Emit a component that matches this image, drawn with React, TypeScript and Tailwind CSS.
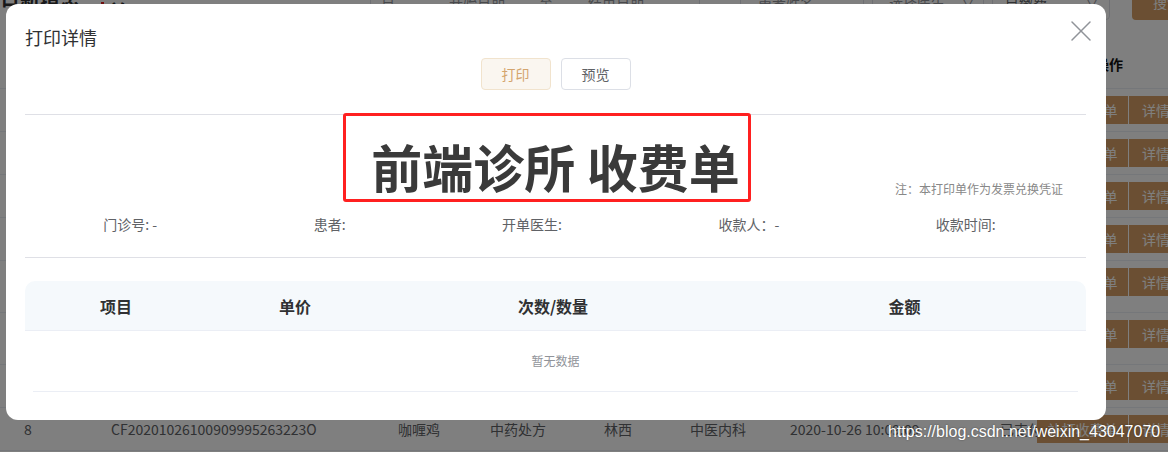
import { X } from 'lucide-react';

type Row = {
  no: number;
  code: string;
  patient: string;
  kind: string;
  doctor: string;
  dept: string;
  time: string;
  status: string;
  height: string;
};

const rows: Row[] = [
  { no: 1, code: 'CF20201026093012345678901A', patient: '张三', kind: '西药处方', doctor: '林西', dept: '内科', time: '2020-10-26 09:30:12', status: '已支付', height: 'h-[43px]' },
  { no: 2, code: 'CF20201026093512345678902B', patient: '李四', kind: '中药处方', doctor: '林西', dept: '中医内科', time: '2020-10-26 09:35:40', status: '已支付', height: 'h-[43px]' },
  { no: 3, code: 'CF20201026094012345678903C', patient: '王五', kind: '检查申请', doctor: '林西', dept: '外科', time: '2020-10-26 09:40:05', status: '已支付', height: 'h-[43px]' },
  { no: 4, code: 'CF20201026094512345678904D', patient: '赵六', kind: '西药处方', doctor: '林西', dept: '内科', time: '2020-10-26 09:45:22', status: '已支付', height: 'h-[43px]' },
  { no: 5, code: 'CF20201026095012345678905E', patient: '孙七', kind: '中药处方', doctor: '林西', dept: '中医内科', time: '2020-10-26 09:50:18', status: '已支付', height: 'h-[52px]' },
  { no: 6, code: 'CF20201026095512345678906F', patient: '周八', kind: '检验申请', doctor: '林西', dept: '检验科', time: '2020-10-26 09:55:31', status: '已支付', height: 'h-[52px]' },
  { no: 7, code: 'CF20201026100112345678907G', patient: '吴九', kind: '西药处方', doctor: '林西', dept: '内科', time: '2020-10-26 10:01:47', status: '已支付', height: 'h-[43px]' },
  { no: 8, code: 'CF20201026100909995263223O', patient: '咖喱鸡', kind: '中药处方', doctor: '林西', dept: '中医内科', time: '2020-10-26 10:09:09', status: '已支付', height: 'h-[43px]' },
];

const Page = () => {
  return (
    <div className="-mt-[24px] w-[1168px]">
      <div className="flex h-[64px] items-start pt-[8px]">
        <div className="-ml-[20px] flex w-[148px] shrink-0 items-center text-[20px] font-bold leading-[28px] text-[#303133]">
          今日新增患者
          <span className="mx-[4px] h-[20px] w-[3px] bg-[#e02020]" />
          单
        </div>
        <div className="ml-[242px] flex h-[36px] w-[330px] shrink-0 items-center rounded-[4px] border border-[#dcdfe6] bg-white px-[10px] text-[14px] text-[#909399]">
          <span>日</span>
          <span className="ml-[54px]">开始日期</span>
          <span className="ml-[34px]">至</span>
          <span className="ml-[35px]">结束日期</span>
        </div>
        <div className="ml-[40px] flex h-[36px] w-[124px] shrink-0 items-center rounded-[4px] border border-[#dcdfe6] bg-white pl-[17px] text-[14px] text-[#909399]">
          患者姓名
        </div>
        <div className="ml-[8px] flex h-[36px] w-[112px] shrink-0 items-center justify-between rounded-[4px] border border-[#dcdfe6] bg-white pl-[16px] pr-[8px] text-[14px] text-[#909399]">
          选择医生<span>∨</span>
        </div>
        <div className="ml-[8px] flex h-[36px] w-[118px] shrink-0 items-center justify-between rounded-[4px] border border-[#dcdfe6] bg-white pl-[12px] pr-[10px] text-[14px] text-[#606266]">
          已缴费<span className="text-[#909399]">∨</span>
        </div>
        <button className="ml-[22px] h-[36px] w-[70px] shrink-0 rounded-[4px] bg-[#d69f66] text-[14px] text-white">搜索</button>
      </div>

      <div className="flex h-[49px] items-center border-b border-[#ebeef5] text-[14px] font-bold text-[#111]">
        <div className="w-[90px] shrink-0 pl-[24px]">序号</div>
        <div className="w-[287px] shrink-0 pl-[21px]">处方号</div>
        <div className="w-[92px] shrink-0 pl-[21px]">患者姓名</div>
        <div className="w-[114px] shrink-0 pl-[21px]">处方类型</div>
        <div className="w-[86px] shrink-0 pl-[21px]">医生</div>
        <div className="w-[100px] shrink-0 pl-[21px]">科室</div>
        <div className="w-[210px] shrink-0 pl-[21px]">开单时间</div>
        <div className="w-[58px] shrink-0 pl-[21px]">状态</div>
        <div className="shrink-0 pl-[58px]">操作</div>
      </div>

      {rows.map((r) => (
        <div key={r.no} className={`flex items-start border-b border-[#ebeef5] pt-[7px] text-[14px] leading-[28px] text-[#606266] ${r.height}`}>
          <div className="w-[90px] shrink-0 pl-[24px]">{r.no}</div>
          <div className="w-[287px] shrink-0 pl-[21px]">{r.code}</div>
          <div className="w-[92px] shrink-0 pl-[21px]">{r.patient}</div>
          <div className="w-[114px] shrink-0 pl-[21px]">{r.kind}</div>
          <div className="w-[86px] shrink-0 pl-[21px]">{r.doctor}</div>
          <div className="w-[100px] shrink-0 pl-[21px]">{r.dept}</div>
          <div className="w-[210px] shrink-0 pl-[21px]">{r.time}</div>
          <div className="w-[58px] shrink-0 whitespace-nowrap pl-[21px]">{r.status}</div>
          <div className="flex h-[28px] shrink-0 gap-px">
            <button className="h-[28px] w-[91px] bg-[#d69f66] text-[14px] text-white">补打收费单</button>
            <button className="h-[28px] w-[54px] bg-[#d69f66] text-[14px] text-white">详情</button>
          </div>
        </div>
      ))}
    </div>
  );
};

const PrintDialog = () => {
  return (
    <div className="absolute left-[6px] top-[4px] flex h-[416px] w-[1100px] flex-col rounded-[12px] bg-white pl-[19px] pr-[20px] pt-[21px]">
      <h2 className="text-[18px] leading-[24px] text-[#303133]">打印详情</h2>
      <button className="absolute right-[7px] top-[9px] text-[#909399]">
        <X size={36} strokeWidth={1} />
      </button>

      <div className="mt-[9px] flex justify-center gap-[10px]">
        <button className="h-[32px] w-[70px] rounded-[4px] border border-[#f1e3cd] bg-[#faf6f0] text-[14px] text-[#d4a56e]">打印</button>
        <button className="h-[32px] w-[70px] rounded-[4px] border border-[#dcdfe6] bg-white text-[14px] text-[#606266]">预览</button>
      </div>

      <div className="mt-[24px] border-t border-[#dfe0e6]" />

      <div className="relative h-[84px] pt-[21px] text-center">
        <h1 className="text-[51px] font-bold leading-[60px] text-[#3a3a3a]">前端诊所 收费单</h1>
        <p className="absolute right-[23px] top-[66px] text-[12px] leading-[16px] text-[#888]">注：本打印单作为发票兑换凭证</p>
      </div>

      <div className="mt-[15px] flex justify-around pr-[12px] text-[14px] leading-[20px] text-[#606266]">
        <span>门诊号: -</span>
        <span>患者:</span>
        <span>开单医生:</span>
        <span>收款人：-</span>
        <span>收款时间:</span>
      </div>

      <div className="mt-[23px] border-t border-[#dfe0e6]" />

      <div className="mt-[23px]">
        <div className="flex h-[50px] items-center rounded-t-[10px] border-b border-[#ebeef5] bg-[#f5f9fc] text-center text-[16px] font-bold text-[#303133]">
          <div className="w-[182px]">项目</div>
          <div className="w-[176px]">单价</div>
          <div className="w-[340px]">次数/数量</div>
          <div className="flex-1">金额</div>
        </div>
        <div className="mx-[8px] flex h-[61px] items-center justify-center border-b border-[#ebeef5] text-[12px] text-[#909399]">
          暂无数据
        </div>
      </div>

      {/* annotation box from the screenshot */}
      <div className="absolute left-[337px] top-[109px] h-[89px] w-[408px] rounded-[3px] border-[3px] border-[#ff2020]" />
    </div>
  );
};

export default function App() {
  return (
    <div className="relative h-[452px] w-[1168px] overflow-hidden bg-white font-['Noto_Sans_CJK_SC',sans-serif]">
      <Page />
      <div className="absolute inset-0 bg-black/50" />
      <PrintDialog />
      <div className="absolute left-[888px] top-[422px] whitespace-nowrap font-['Liberation_Sans',Arial,sans-serif] text-[16px] leading-[20px] text-white [text-shadow:0_0_2px_rgba(0,0,0,0.45)]">
        https://blog.csdn.net/weixin_43047070
      </div>
    </div>
  );
}
